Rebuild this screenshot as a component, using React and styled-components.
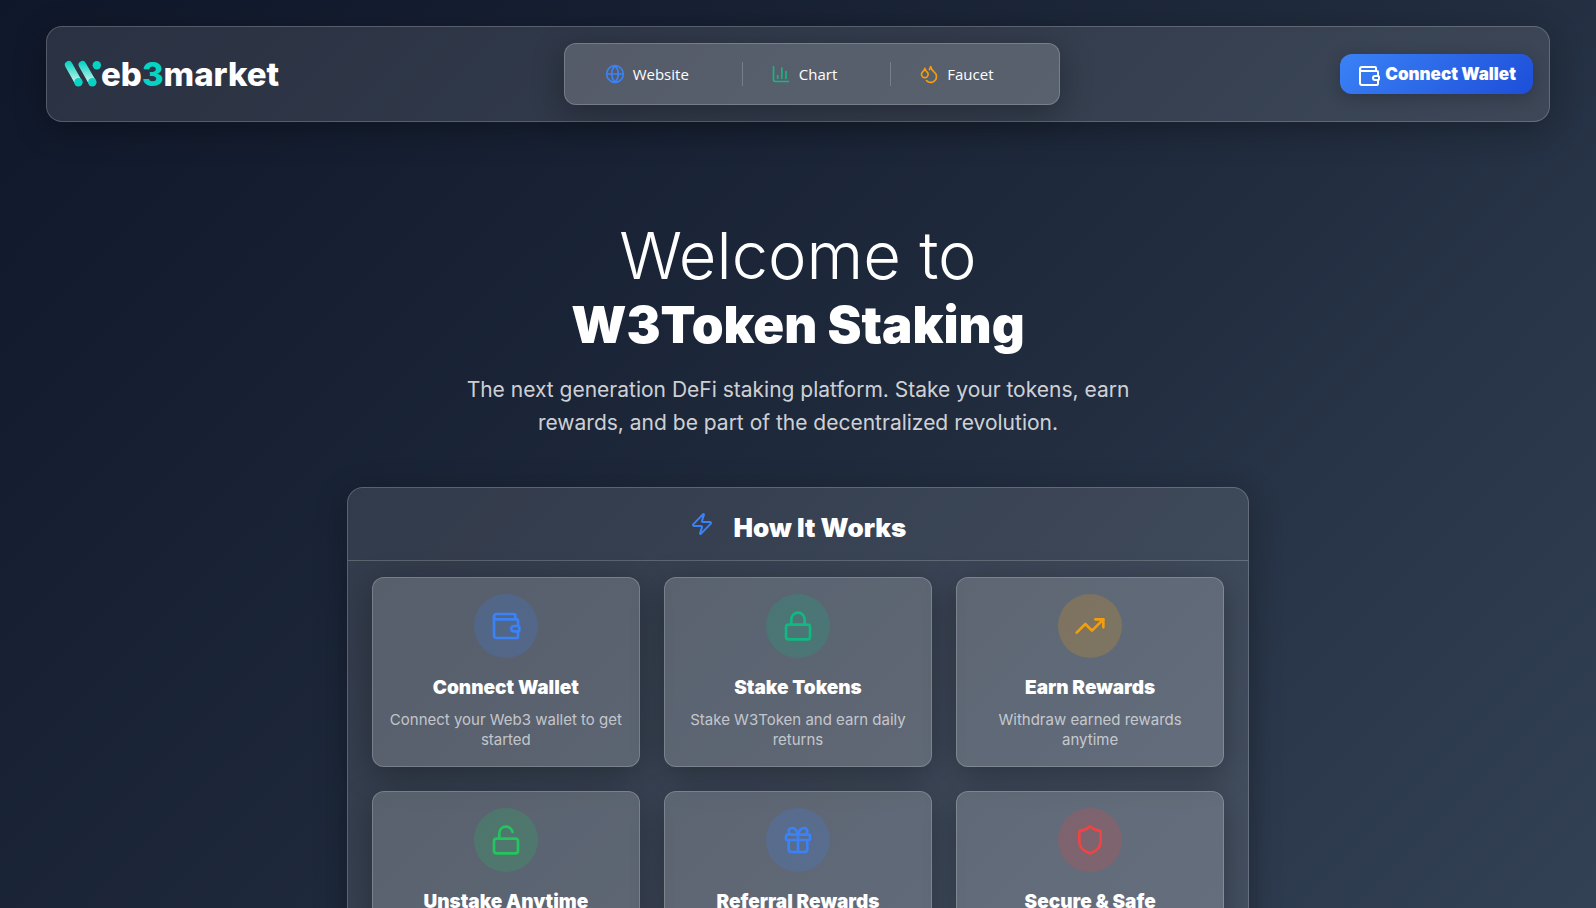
import React from "react";
import styled, { createGlobalStyle } from "styled-components";
import {
  ChartColumn,
  Droplets,
  Gift,
  Globe,
  Lock,
  LockOpen,
  Shield,
  TrendingUp,
  Wallet,
  Zap,
} from "lucide-react";

const GlobalStyle = createGlobalStyle`
  * {
    box-sizing: border-box;
  }

  body {
    margin: 0;
    min-height: 100vh;
    color: #ffffff;
    font-family: Inter, "Open Sans", sans-serif;
    background: linear-gradient(135deg, #0f172a 0%, #1e293b 50%, #334155 100%) fixed;
  }
`;

const Page = styled.div`
  padding: 26px 46px;
`;

const Header = styled.header`
  display: flex;
  align-items: center;
  justify-content: space-between;
  padding: 16px;
  border: 1px solid rgba(255, 255, 255, 0.2);
  border-radius: 16px;
  background: rgba(255, 255, 255, 0.11);
  box-shadow: 0 8px 32px rgba(0, 0, 0, 0.3);
`;

const Logo = styled.a`
  display: flex;
  align-items: center;
  width: 220px;
  color: #ffffff;
  font-size: 33px;
  font-weight: 800;
  line-height: 40px;
  text-decoration: none;

  svg {
    flex: none;
  }

  b {
    color: #06d3c3;
    font-weight: 800;
  }
`;

const Nav = styled.nav`
  display: flex;
  align-items: center;
  padding: 18px 12px;
  border: 1px solid rgba(255, 255, 255, 0.2);
  border-radius: 12px;
  background: rgba(255, 255, 255, 0.18);
  box-shadow: 0 8px 32px rgba(0, 0, 0, 0.3);
`;

const NavLink = styled.a`
  display: flex;
  align-items: center;
  gap: 8px;
  padding: 0 53px 0 28px;
  color: #ffffff;
  font-family: "Open Sans", sans-serif;
  font-size: 15px;
  line-height: 24px;
  text-decoration: none;

  & + & {
    border-left: 1px solid rgba(255, 255, 255, 0.2);
  }

  svg {
    color: ${(props) => props.$color};
  }
`;

const ConnectButton = styled.button`
  display: flex;
  align-items: flex-start;
  gap: 4px;
  padding: 10px 17px 6px;
  border: none;
  border-radius: 12px;
  color: #ffffff;
  font-family: inherit;
  font-size: 17px;
  font-weight: 900;
  line-height: 20px;
  background: linear-gradient(135deg, #3b82f6 0%, #1d4ed8 100%);
  box-shadow: 0 4px 16px rgba(0, 0, 0, 0.2);
  cursor: pointer;
`;

const Hero = styled.section`
  padding: 96px 0 48px;
  text-align: center;

  h1 {
    margin: 0;
    font-size: 65px;
    font-weight: 300;
    line-height: 75px;
  }

  strong {
    display: block;
    font-size: 51px;
    font-weight: 900;
    line-height: 64px;
  }

  p {
    max-width: 720px;
    margin: 16px auto 0;
    color: rgba(255, 255, 255, 0.8);
    font-size: 21px;
    line-height: 33px;
  }
`;

const Panel = styled.section`
  width: 60%;
  margin: 0 auto;
  border: 1px solid rgba(255, 255, 255, 0.2);
  border-radius: 16px;
  background: rgba(255, 255, 255, 0.11);
  box-shadow: 0 8px 32px rgba(0, 0, 0, 0.3);
`;

const PanelHeader = styled.div`
  display: flex;
  align-items: flex-start;
  justify-content: center;
  gap: 20px;
  padding: 24px 24px 16px;
  border-bottom: 1px solid rgba(255, 255, 255, 0.2);

  svg {
    color: #3b82f6;
  }

  h2 {
    margin: 0;
    font-size: 26px;
    font-weight: 900;
    line-height: 32px;
  }
`;

const CardGrid = styled.div`
  display: grid;
  grid-template-columns: repeat(3, 1fr);
  grid-auto-rows: 1fr;
  gap: 24px;
  padding: 16px 24px 24px;
`;

const Card = styled.article`
  padding: 16px;
  border: 1px solid rgba(255, 255, 255, 0.2);
  border-radius: 12px;
  text-align: center;
  background: rgba(255, 255, 255, 0.18);
  box-shadow: 0 8px 32px rgba(0, 0, 0, 0.3);

  h3 {
    margin: 16px 0 8px;
    font-size: 19px;
    font-weight: 900;
    line-height: 28px;
  }

  p {
    margin: 0;
    color: rgba(255, 255, 255, 0.65);
    font-size: 15px;
    line-height: 20px;
  }
`;

const IconCircle = styled.div`
  display: flex;
  align-items: center;
  justify-content: center;
  width: 64px;
  height: 64px;
  margin: 0 auto;
  border-radius: 50%;
  color: ${(props) => props.$color};
  background: ${(props) => props.$color}33;
`;

const links = [
  { label: "Website", icon: Globe, color: "#3b82f6" },
  { label: "Chart", icon: ChartColumn, color: "#10b981" },
  { label: "Faucet", icon: Droplets, color: "#f59e0b" },
];

const steps = [
  {
    title: "Connect Wallet",
    text: "Connect your Web3 wallet to get started",
    icon: Wallet,
    color: "#3b82f6",
  },
  {
    title: "Stake Tokens",
    text: "Stake W3Token and earn daily returns",
    icon: Lock,
    color: "#10b981",
  },
  {
    title: "Earn Rewards",
    text: "Withdraw earned rewards anytime",
    icon: TrendingUp,
    color: "#f59e0b",
  },
  { title: "Unstake Anytime", icon: LockOpen, color: "#22c55e" },
  { title: "Referral Rewards", icon: Gift, color: "#3b82f6" },
  { title: "Secure & Safe", icon: Shield, color: "#ef4444" },
];

const LogoMark = () => (
  <svg width="38" height="30" viewBox="0 0 38 30" aria-hidden="true">
    <defs>
      <linearGradient
        id="stripe"
        gradientUnits="userSpaceOnUse"
        x1="0"
        y1="3"
        x2="0"
        y2="23"
      >
        <stop offset="0" stopColor="#06d3c3" />
        <stop offset="1" stopColor="#c9f3ea" />
      </linearGradient>
    </defs>
    <g stroke="url(#stripe)" strokeWidth="7.6" strokeLinecap="round">
      <path d="M5.7 5.8L15.3 23" />
      <path d="M19.4 5.8L29.2 23" />
    </g>
    <g fill="#06d3c3">
      <circle cx="15.4" cy="23.2" r="4.2" />
      <circle cx="29.3" cy="23.2" r="4.2" />
      <circle cx="33.8" cy="6.2" r="4.2" />
    </g>
  </svg>
);

const App = () => {
  return (
    <>
      <GlobalStyle />
      <Page>
        <Header>
          <Logo href="#">
            <LogoMark />
            <span>
              eb<b>3</b>market
            </span>
          </Logo>
          <Nav>
            {links.map(({ label, icon: Icon, color }) => (
              <NavLink href="#" key={label} $color={color}>
                <Icon size={20} />
                {label}
              </NavLink>
            ))}
          </Nav>
          <ConnectButton type="button">
            <Wallet size={24} />
            Connect Wallet
          </ConnectButton>
        </Header>
        <main>
          <Hero>
            <h1>
              Welcome to
              <strong>W3Token Staking</strong>
            </h1>
            <p>
              The next generation DeFi staking platform. Stake your tokens, earn
              rewards, and be part of the decentralized revolution.
            </p>
          </Hero>
          <Panel>
            <PanelHeader>
              <Zap size={24} />
              <h2>How It Works</h2>
            </PanelHeader>
            <CardGrid>
              {steps.map(({ title, text, icon: Icon, color }) => (
                <Card key={title}>
                  <IconCircle $color={color}>
                    <Icon size={32} />
                  </IconCircle>
                  <h3>{title}</h3>
                  {text && <p>{text}</p>}
                </Card>
              ))}
            </CardGrid>
          </Panel>
        </main>
      </Page>
    </>
  );
};

export default App;
